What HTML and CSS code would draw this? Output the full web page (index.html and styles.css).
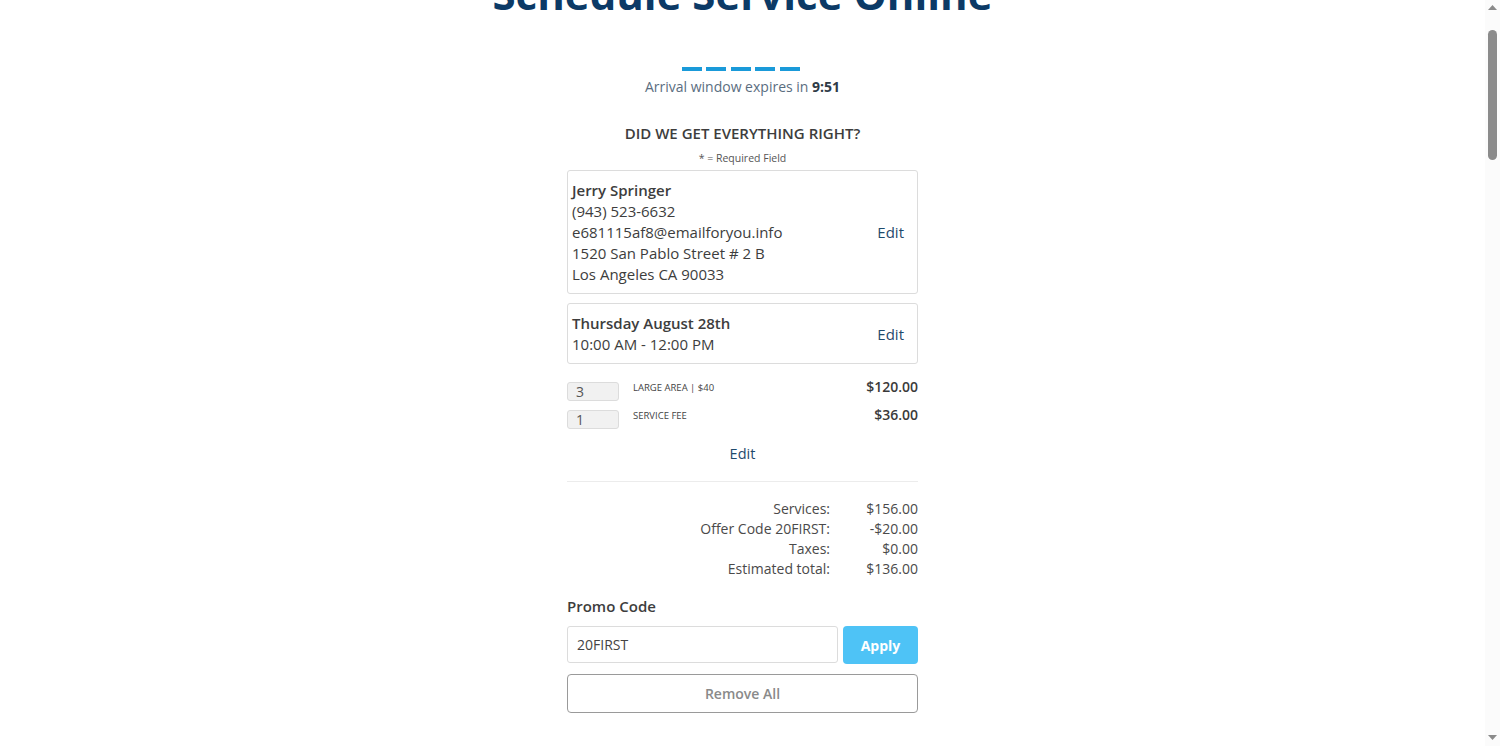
FILE: index.html
```html
<!DOCTYPE html>
<html lang="en">
<head>
<meta charset="utf-8">
<title>Schedule Service Online</title>
<link rel="stylesheet" href="styles.css">
</head>
<body>
<main class="page">
  <h1 class="title">Schedule Service Online</h1>

  <div class="progress">
    <span class="dash"></span><span class="dash"></span><span class="dash"></span><span class="dash"></span><span class="dash"></span>
  </div>
  <p class="timer">Arrival window expires in <b>9:51</b></p>

  <section class="review">
    <h2 class="review-title">DID WE GET EVERYTHING RIGHT?</h2>
    <p class="required">* = Required Field</p>

    <div class="card">
      <div class="card-body">
        <div class="strong">Jerry Springer</div>
        <div>(943) 523-6632</div>
        <div>e681115af8@emailforyou.info</div>
        <div>1520 San Pablo Street # 2 B</div>
        <div>Los Angeles CA 90033</div>
      </div>
      <a class="edit" href="#">Edit</a>
    </div>

    <div class="card">
      <div class="card-body">
        <div class="strong">Thursday August 28th</div>
        <div>10:00 AM - 12:00 PM</div>
      </div>
      <a class="edit" href="#">Edit</a>
    </div>

    <div class="items">
      <div class="item">
        <input class="qty" type="text" value="3" readonly>
        <span class="item-name">LARGE AREA | $40</span>
        <span class="item-price">$120.00</span>
      </div>
      <div class="item">
        <input class="qty" type="text" value="1" readonly>
        <span class="item-name">SERVICE FEE</span>
        <span class="item-price">$36.00</span>
      </div>
    </div>
    <div class="items-edit"><a class="edit" href="#">Edit</a></div>

    <hr class="divider">

    <dl class="totals">
      <dt>Services:</dt><dd>$156.00</dd>
      <dt>Offer Code 20FIRST:</dt><dd>-$20.00</dd>
      <dt>Taxes:</dt><dd>$0.00</dd>
      <dt>Estimated total:</dt><dd>$136.00</dd>
    </dl>

    <label class="promo-label" for="promo">Promo Code</label>
    <div class="promo-row">
      <input id="promo" class="promo-input" type="text" value="20FIRST">
      <button class="apply" type="button">Apply</button>
    </div>
    <button class="remove" type="button">Remove All</button>
  </section>
</main>

<div class="scrollbar" aria-hidden="true">
  <svg class="sb-arrow" width="9" height="5" viewBox="0 0 9 5"><path d="M0 5 L4.5 0 L9 5 Z" fill="#8a8a8a"/></svg>
  <span class="sb-track"><span class="sb-thumb"></span></span>
  <svg class="sb-arrow" width="9" height="5" viewBox="0 0 9 5"><path d="M0 0 L4.5 5 L9 0 Z" fill="#8a8a8a"/></svg>
</div>
<script src="script.js"></script>
</body>
</html>
```

FILE: styles.css
```css
html, body {
  margin: 0;
  padding: 0;
  background: #fff;
}

html {
  scrollbar-width: none;
}

body {
  font-family: "Open Sans", "Liberation Sans", sans-serif;
  color: #3a3a3a;
}

.page {
  min-height: 4080px;
  display: flex;
  flex-direction: column;
  align-items: center;
  padding-top: 49px;
  padding-right: 15px;
}

.title {
  margin: 0;
  font-size: 42px;
  line-height: 50px;
  font-weight: 700;
  color: #0c3a66;
}

.progress {
  display: flex;
  gap: 4.5px;
  margin-top: 48px;
  margin-right: 4px;
}

.dash {
  width: 20px;
  height: 4px;
  background: #1a9ad9;
}

.timer {
  margin: 6px 0 0;
  font-size: 14px;
  line-height: 20px;
  color: #5a6d80;
}

.timer b {
  color: #2f3b47;
  font-weight: 700;
}

.review {
  width: 351px;
  display: flex;
  flex-direction: column;
  margin-top: 26px;
}

.review-title {
  margin: 0;
  text-align: center;
  font-size: 15px;
  line-height: 20px;
  font-weight: 600;
  color: #3d3d3d;
}

.required {
  margin: 8px 0 0;
  text-align: center;
  font-size: 10.5px;
  line-height: 14px;
  color: #555;
}

.card {
  display: flex;
  align-items: center;
  justify-content: space-between;
  border: 1px solid #dcdcdc;
  border-radius: 3px;
  padding: 9px 13px 8px 4px;
  margin-top: 5px;
  font-size: 15px;
  line-height: 21px;
  color: #3d3d3d;
}

.card + .card {
  margin-top: 9px;
}

.strong {
  font-weight: 600;
}

.edit {
  color: #1f4a6c;
  text-decoration: none;
  font-size: 15px;
}

.items {
  display: flex;
  flex-direction: column;
  gap: 9px;
  margin-top: 18px;
}

.item {
  display: flex;
  align-items: flex-start;
}

.qty {
  box-sizing: border-box;
  width: 52px;
  height: 19px;
  margin: 0;
  padding: 0 0 0 8px;
  border: 1px solid #dcdcdc;
  border-radius: 3px;
  background: #f1f1f1;
  font-family: inherit;
  font-size: 14px;
  line-height: 17px;
  color: #555;
}

.item-name {
  margin-left: 14px;
  font-size: 9.5px;
  line-height: 12px;
  color: #444;
  flex: 1;
}

.item-price {
  font-size: 14px;
  line-height: 12px;
  font-weight: 600;
  color: #3a3a3a;
  margin-top: -1px;
}

.items-edit {
  text-align: center;
  margin-top: 14px;
  line-height: 20px;
}

.items-edit .edit {
  font-size: 14.5px;
}

.divider {
  width: 100%;
  margin: 17px 0 0;
  border: 0;
  border-top: 1px solid #ececec;
}

.totals {
  display: grid;
  grid-template-columns: 1fr 88px;
  margin: 17px 0 0;
  font-size: 14px;
  line-height: 20px;
  color: #4a4a4a;
}

.totals dt,
.totals dd {
  margin: 0;
  text-align: right;
}

.promo-label {
  margin-top: 17px;
  font-size: 15px;
  line-height: 20px;
  font-weight: 600;
  color: #3d3d3d;
}

.promo-row {
  display: flex;
  gap: 5px;
  margin-top: 10px;
}

.promo-input {
  box-sizing: border-box;
  flex: 1;
  height: 37px;
  margin: 0;
  padding: 0 9px;
  border: 1px solid #dcdcdc;
  border-radius: 3px;
  font-family: inherit;
  font-size: 14px;
  color: #444;
}

.apply {
  width: 75px;
  height: 38px;
  border: 0;
  border-radius: 4px;
  background: #4ec3f6;
  color: #fff;
  font-family: inherit;
  font-size: 14px;
  font-weight: 700;
}

.remove {
  box-sizing: border-box;
  height: 39px;
  margin-top: 10px;
  border: 1px solid #9a9a9a;
  border-radius: 4px;
  background: #fff;
  color: #8a8a8a;
  font-family: inherit;
  font-size: 14px;
  font-weight: 600;
}

/* drawn scrollbar overlay */
.scrollbar {
  position: fixed;
  top: 0;
  right: 0;
  bottom: 0;
  width: 15px;
  background: #fbfbfb;
  display: flex;
  flex-direction: column;
  align-items: center;
  padding: 5px 0 6px;
  box-sizing: border-box;
}

.sb-arrow {
  display: block;
  flex: none;
}

.sb-track {
  flex: 1;
  width: 100%;
  display: flex;
  justify-content: center;
  padding-top: 20px;
}

.sb-thumb {
  width: 9px;
  height: 130px;
  border-radius: 5px;
  background: #8b8b8b;
}
```

FILE: script.js
```js
window.scrollTo(0, 80);
```
